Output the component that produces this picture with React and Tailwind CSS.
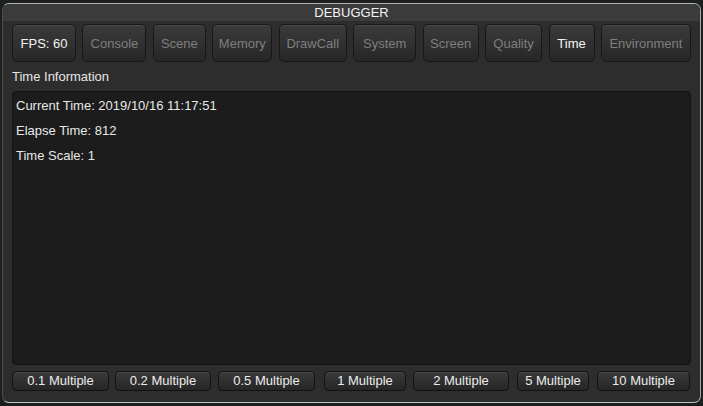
const tabs = [
  { label: 'FPS: 60', w: 'w-[64px]', active: true },
  { label: 'Console', w: 'w-[64px]' },
  { label: 'Scene', w: 'w-[53px]' },
  { label: 'Memory', w: 'w-[60px]' },
  { label: 'DrawCall', w: 'w-[68px]' },
  { label: 'System', w: 'w-[63px]' },
  { label: 'Screen', w: 'w-[56px]' },
  { label: 'Quality', w: 'w-[57px]' },
  { label: 'Time', w: 'w-[46px]', active: true },
  { label: 'Environment', w: 'w-[90px]' },
];

// widths and left gaps measured from the layout
const multiples = [
  { label: '0.1 Multiple', cls: 'w-[97px]' },
  { label: '0.2 Multiple', cls: 'w-[96px] ml-[6px]' },
  { label: '0.5 Multiple', cls: 'w-[97px] ml-[7px]' },
  { label: '1 Multiple', cls: 'w-[82px] ml-[9px]' },
  { label: '2 Multiple', cls: 'w-[96px] ml-[7px]' },
  { label: '5 Multiple', cls: 'w-[72px] ml-[8px]' },
  { label: '10 Multiple', cls: 'w-[93px] ml-[8px]' },
];

export default function App() {
  return (
    <div className="w-[703px] h-[406px] bg-[#1b201e] pt-[3px] pb-[3px] pl-[2px] pr-[2px] font-['Liberation_Sans',Arial,sans-serif]">
      <div className="h-full flex flex-col rounded-[7px] border border-t-[#b4b4b4] border-r-[#a8a8a8] border-b-[#c4c4c4] border-l-[#4c4c4c] bg-[#2d2d2d] overflow-hidden">
        {/* title */}
        <div className="h-[17px] shrink-0 bg-[#3b3b3b] text-center text-[13px] leading-[18px] text-[#f2f2f2]">
          DEBUGGER
        </div>

        <div className="flex-1 flex flex-col px-[9px] pt-[3px] pb-[11px]">
          {/* tabs */}
          <div className="h-[38px] shrink-0 flex justify-between">
            {tabs.map((t) => (
              <div
                key={t.label}
                className={`${t.w} h-full flex items-center justify-center pt-[1px] rounded-[5px] border border-[#171717] bg-gradient-to-b from-[#3b3b3b] to-[#272727] shadow-[inset_0_1px_0_#4a4a4a] text-[13px] ${t.active ? 'text-[#f4f4f4]' : 'text-[#7e7e7e]'}`}
              >
                {t.label}
              </div>
            ))}
          </div>

          <div className="h-[29px] shrink-0 flex items-center pt-[1px] text-[13px] text-[#e6e6e6]">Time Information</div>

          {/* info box */}
          <div className="flex-1 rounded-[4px] border border-[#121212] bg-[#1c1c1c] px-[3px] pt-[1px] text-[13px] text-[#e8e8e8]">
            <div className="h-[25px] flex items-center">Current Time: 2019/10/16 11:17:51</div>
            <div className="h-[25px] flex items-center">Elapse Time: 812</div>
            <div className="h-[25px] flex items-center">Time Scale: 1</div>
          </div>

          {/* multiples */}
          <div className="mt-[6px] h-[20px] shrink-0 flex">
            {multiples.map((m) => (
              <div
                key={m.label}
                className={`${m.cls} h-full flex items-center justify-center rounded-[4px] border border-[#131313] bg-gradient-to-b from-[#3a3a3a] to-[#262626] shadow-[inset_0_1px_0_#484848] text-[13px] text-[#ececec]`}
              >
                {m.label}
              </div>
            ))}
          </div>
        </div>
      </div>
    </div>
  );
}
